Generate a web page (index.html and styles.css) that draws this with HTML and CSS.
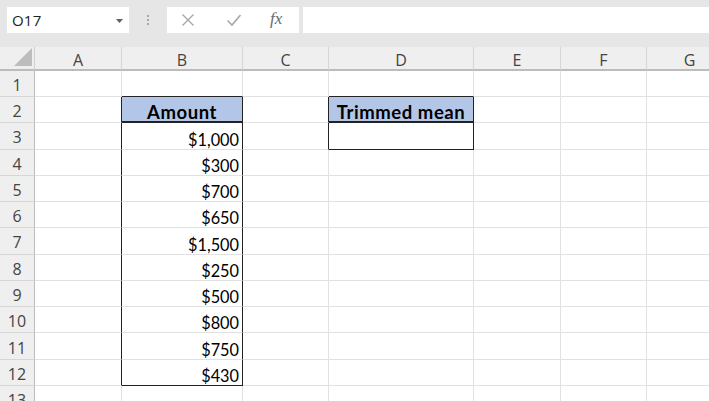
FILE: index.html
```html
<!DOCTYPE html>
<html>
<head>
<meta charset="utf-8">
<link rel="stylesheet" href="styles.css">
</head>
<body>
<div class="app">
  <div class="toolbar">
    <div class="namebox">
      <span class="name">O17</span>
      <svg class="caret" width="7" height="4" viewBox="0 0 7 4"><path d="M0 0h7L3.5 4z" fill="#606060"/></svg>
    </div>
    <div class="grip"><i></i><i></i><i></i></div>
    <div class="fxbox">
      <svg class="ico" width="14" height="14" viewBox="0 0 14 14"><path d="M1.5 1.5l11 11M12.5 1.5l-11 11" stroke="#a8a8a8" stroke-width="1.4" fill="none"/></svg>
      <svg class="ico" width="16" height="14" viewBox="0 0 16 14"><path d="M1.5 7.5l4.5 4.5 8.5-10" stroke="#a8a8a8" stroke-width="1.6" fill="none"/></svg>
      <span class="fx">fx</span>
    </div>
    <div class="formula"></div>
  </div>
  <div class="sheet">
    <div class="corner"><svg width="18" height="18" viewBox="0 0 18 18"><path d="M18 0V18H0z" fill="#bdbdbd"/></svg></div>
    <div class="ch">A</div><div class="ch">B</div><div class="ch">C</div><div class="ch">D</div><div class="ch">E</div><div class="ch">F</div><div class="ch">G</div>

    <div class="rh">1</div><div class="c"></div><div class="c bb"></div><div class="c"></div><div class="c bb"></div><div class="c"></div><div class="c"></div><div class="c"></div>

    <div class="rh">2</div><div class="c br"></div><div class="c hd br bb">Amount</div><div class="c br"></div><div class="c hd br bb">Trimmed mean</div><div class="c"></div><div class="c"></div><div class="c"></div>

    <div class="rh">3</div><div class="c br"></div><div class="c num br">$1,000</div><div class="c br"></div><div class="c br bb"></div><div class="c"></div><div class="c"></div><div class="c"></div>

    <div class="rh">4</div><div class="c br"></div><div class="c num br">$300</div><div class="c"></div><div class="c"></div><div class="c"></div><div class="c"></div><div class="c"></div>

    <div class="rh">5</div><div class="c br"></div><div class="c num br">$700</div><div class="c"></div><div class="c"></div><div class="c"></div><div class="c"></div><div class="c"></div>

    <div class="rh">6</div><div class="c br"></div><div class="c num br">$650</div><div class="c"></div><div class="c"></div><div class="c"></div><div class="c"></div><div class="c"></div>

    <div class="rh">7</div><div class="c br"></div><div class="c num br">$1,500</div><div class="c"></div><div class="c"></div><div class="c"></div><div class="c"></div><div class="c"></div>

    <div class="rh">8</div><div class="c br"></div><div class="c num br">$250</div><div class="c"></div><div class="c"></div><div class="c"></div><div class="c"></div><div class="c"></div>

    <div class="rh">9</div><div class="c br"></div><div class="c num br">$500</div><div class="c"></div><div class="c"></div><div class="c"></div><div class="c"></div><div class="c"></div>

    <div class="rh">10</div><div class="c br"></div><div class="c num br">$800</div><div class="c"></div><div class="c"></div><div class="c"></div><div class="c"></div><div class="c"></div>

    <div class="rh">11</div><div class="c br"></div><div class="c num br">$750</div><div class="c"></div><div class="c"></div><div class="c"></div><div class="c"></div><div class="c"></div>

    <div class="rh">12</div><div class="c br"></div><div class="c num br bb">$430</div><div class="c"></div><div class="c"></div><div class="c"></div><div class="c"></div><div class="c"></div>

    <div class="rh">13</div><div class="c"></div><div class="c"></div><div class="c"></div><div class="c"></div><div class="c"></div><div class="c"></div><div class="c"></div>
  </div>
</div>
</body>
</html>
```
FILE: styles.css
```css
* { box-sizing: border-box; }
html, body { margin: 0; padding: 0; background: #fff; }
body { width: 709px; height: 401px; overflow: hidden; }
.app { width: 709px; height: 401px; overflow: hidden; }

.toolbar {
  height: 47px;
  background: #e6e6e6;
  display: flex;
  align-items: flex-start;
  padding-top: 7px;
}
.namebox {
  margin-left: 7px;
  width: 122px;
  height: 26px;
  background: #fff;
  display: flex;
  align-items: center;
  justify-content: space-between;
  padding: 0 6px 0 5px;
}
.name {
  font-family: "Open Sans", "Noto Sans", sans-serif;
  font-size: 15px;
  color: #222;
  letter-spacing: 0.2px;
}
.caret { margin-top: 1px; }
.grip {
  width: 38px;
  height: 26px;
  display: flex;
  flex-direction: column;
  align-items: center;
  justify-content: center;
  gap: 2px;
}
.grip i {
  display: block;
  width: 2px;
  height: 2px;
  background: #a9a9a9;
}
.fxbox {
  width: 132px;
  height: 26px;
  background: #fff;
  display: flex;
  align-items: center;
  padding-left: 14px;
}
.fxbox .ico:first-child { margin-right: 31px; }
.fxbox .ico:nth-child(2) { margin-right: 28px; }
.fx {
  font-family: "Liberation Serif", serif;
  font-style: italic;
  font-size: 17px;
  color: #6a6a6a;
  margin-top: -2px;
}
.formula {
  margin-left: 4px;
  flex: 1;
  height: 26px;
  background: #fff;
}

.sheet {
  display: grid;
  grid-template-columns: 35px 87px 121px 86px 145px 87px 86px 86px;
  grid-template-rows: 24px 26px repeat(12, 26.27px);
  font-family: "Lato", sans-serif;
}
.corner {
  background: #efefef;
  border-right: 1px solid #cfcfcf;
  border-bottom: 2px solid #bcbcbc;
  display: flex;
  align-items: flex-end;
  justify-content: flex-end;
  padding: 0 2px 3px 0;
}
.corner svg { display: block; }
.ch {
  background: #efefef;
  border-right: 1px solid #d6d6d6;
  border-bottom: 2px solid #bcbcbc;
  display: flex;
  align-items: center;
  justify-content: center;
  font-family: "Open Sans", "Noto Sans", sans-serif;
  font-size: 16px;
  color: #444;
  padding-top: 3px;
}
.rh {
  background: #efefef;
  border-right: 1px solid #bcbcbc;
  border-bottom: 1px solid #d6d6d6;
  display: flex;
  align-items: center;
  justify-content: center;
  font-family: "Open Sans", "Noto Sans", sans-serif;
  font-size: 16px;
  color: #444;
  padding-top: 3px;
}
.c {
  border-right: 1px solid #e1e1e1;
  border-bottom: 1px solid #e1e1e1;
  display: flex;
  align-items: flex-end;
  padding: 0 3px 2px 3px;
  font-size: 16.3px;
  color: #000;
  line-height: 14px;
}
.c.br { border-right-color: #222; }
.c.bb { border-bottom-color: #222; }
.hd {
  background: #b4c6e7;
  font-weight: bold;
  font-size: 18.5px;
  letter-spacing: 0.55px;
  justify-content: center;
  padding-bottom: 2px;
}
.c.hd.bb { border-bottom-width: 2px; }
.num { justify-content: flex-end; }
```
